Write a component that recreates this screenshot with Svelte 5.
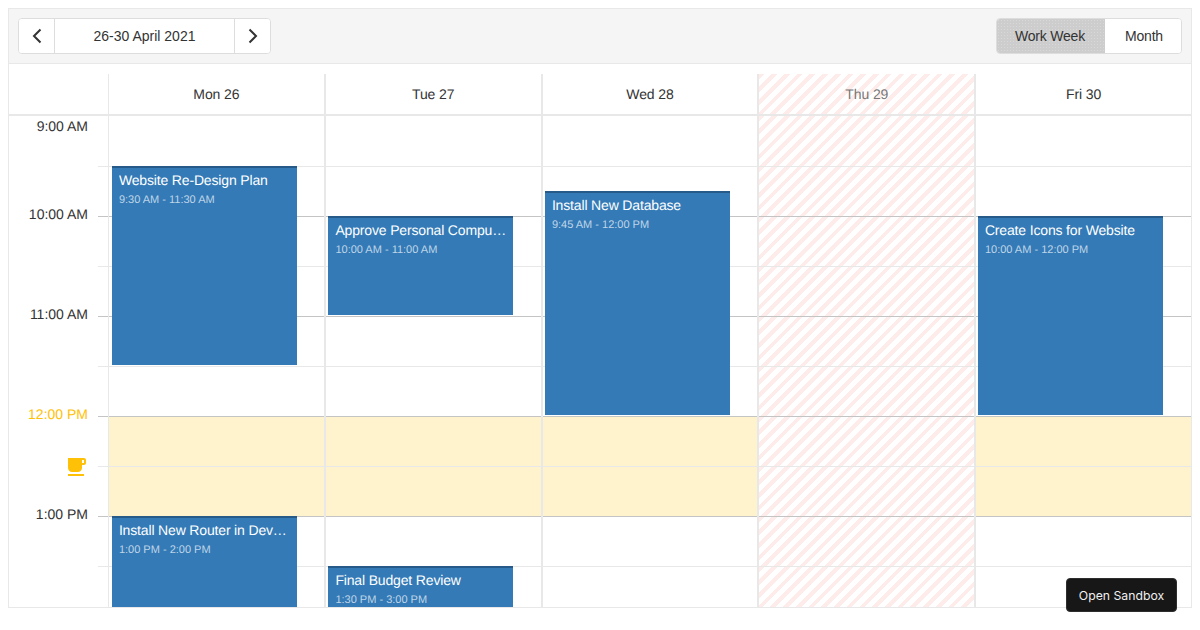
<script lang="ts">
  const days = [
    { label: "Mon 26" },
    { label: "Tue 27" },
    { label: "Wed 28" },
    { label: "Thu 29", disabled: true },
    { label: "Fri 30" },
  ];

  const start = 9;
  const hours = [
    { label: "9:00 AM" },
    { label: "10:00 AM" },
    { label: "11:00 AM" },
    { label: "12:00 PM", dinner: true },
    { label: "1:00 PM" },
  ];

  // half-hour slots, 9:00 to 2:00
  const slots = Array.from({ length: 10 }, (_, i) => ({
    hour: i % 2 === 0,
    dinner: i === 6 || i === 7,
  }));

  const appointments = [
    { day: 0, title: "Website Re-Design Plan", time: "9:30 AM - 11:30 AM", from: 9.5, to: 11.5 },
    { day: 0, title: "Install New Router in Dev Room", time: "1:00 PM - 2:00 PM", from: 13, to: 14 },
    { day: 1, title: "Approve Personal Computer Upgrade Plan", time: "10:00 AM - 11:00 AM", from: 10, to: 11 },
    { day: 1, title: "Final Budget Review", time: "1:30 PM - 3:00 PM", from: 13.5, to: 15 },
    { day: 2, title: "Install New Database", time: "9:45 AM - 12:00 PM", from: 9.75, to: 12 },
    { day: 4, title: "Create Icons for Website", time: "10:00 AM - 12:00 PM", from: 10, to: 12 },
  ];

  const hourHeight = 100;
  const dayStep = 216.5;
</script>

<div class="scheduler">
  <div class="toolbar">
    <div class="nav">
      <button class="nav-btn" aria-label="Previous">
        <svg width="12" height="18" viewBox="0 0 12 18"><path d="M9.500 2.500 3 9l6.500 6.500" /></svg>
      </button>
      <button class="nav-date">26-30 April 2021</button>
      <button class="nav-btn" aria-label="Next">
        <svg width="12" height="18" viewBox="0 0 12 18"><path d="M2.500 2.500 9 9l-6.500 6.500" /></svg>
      </button>
    </div>
    <div class="views">
      <button class="view active">Work Week</button>
      <button class="view month">Month</button>
    </div>
  </div>

  <div class="header">
    <div class="corner"></div>
    {#each days as d}
      <div class="day-head" class:disabled={d.disabled}>{d.label}</div>
    {/each}
  </div>

  <div class="body">
    <div class="times">
      {#each hours as h, i}
        <div class="time-slot" class:first={i === 0}>
          <span class="hour" class:dinner={h.dinner}>{h.label}</span>
        </div>
        <div class="time-slot half">
          {#if h.dinner}
            <svg class="cafe" width="24" height="24" viewBox="0 0 24 24">
              <path d="M20 3H4v10c0 2.210 1.790 4 4 4h6c2.210 0 4-1.790 4-4v-3h2c1.110 0 2-.9 2-2V5c0-1.110-.89-2-2-2zm0 5h-2V5h2v3zM4 19h16v2H4z" />
            </svg>
          {/if}
        </div>
      {/each}
    </div>

    {#each days as d}
      <div class="day">
        {#each slots as s, si}
          <div class="slot" class:hour-line={s.hour && si > 0} class:first={si === 0} class:dinner={s.dinner && !d.disabled} class:disabled={d.disabled}></div>
        {/each}
      </div>
    {/each}

    {#each appointments as a}
      <div
        class="appt"
        style="left: {102.9 + a.day * dayStep}px; top: {(a.from - start) * hourHeight}px; height: {(a.to - a.from) * hourHeight - 1}px"
      >
        <div class="appt-title">{a.title}</div>
        <div class="appt-time">{a.time}</div>
      </div>
    {/each}
  </div>
</div>

<button class="sandbox">Open Sandbox</button>

<style>
  :global(body) {
    margin: 0;
    background: #fff;
    font-family: "Liberation Sans", Arial, sans-serif;
    color: #333;
    text-rendering: geometricPrecision;
  }
  button {
    font: inherit;
    color: inherit;
    padding: 0;
    background: #fff;
    border: 0;
  }
  .scheduler {
    box-sizing: border-box;
    width: 1184px;
    height: 600px;
    margin: 8px 0 0 8px;
    border: 1px solid #e8e8e8;
    overflow: hidden;
    font-size: 14px;
    display: flex;
    flex-direction: column;
  }
  .toolbar {
    box-sizing: border-box;
    flex: none;
    height: 55px;
    padding: 9px;
    background: #f5f5f5;
    border-bottom: 1px solid #e8e8e8;
    display: flex;
    justify-content: space-between;
  }
  .nav,
  .views {
    display: flex;
    height: 36px;
    box-sizing: border-box;
    border: 1px solid #ddd;
    border-radius: 4px;
    background: #fff;
    overflow: hidden;
  }
  .nav-btn {
    width: 35px;
    display: flex;
    align-items: center;
    justify-content: center;
  }
  .nav-btn path {
    fill: none;
    stroke: #333;
    stroke-width: 2;
  }
  .nav-date {
    width: 181px;
    border-left: 1px solid #ddd;
    border-right: 1px solid #ddd;
  }
  .view {
    box-sizing: border-box;
    height: 100%;
    letter-spacing: -0.2px;
  }
  .view.active {
    width: 108px;
    padding-right: 2px;
    background-color: #cdcdcd;
    background-image: radial-gradient(#d8d8d8 0.6px, transparent 0.7px);
    background-size: 3px 3px;
  }
  .view.month {
    width: 76px;
    padding-left: 2px;
  }
  .header {
    flex: none;
    display: grid;
    grid-template-columns: 99px repeat(5, 216.8px);
    padding-top: 10px;
    letter-spacing: -0.1px;
    border-bottom: 2px solid #e8e8e8;
  }
  .day-head {
    height: 40px;
    line-height: 40px;
    text-align: center;
    border-left: 1px solid #e8e8e8;
    border-right: 1px solid #e8e8e8;
  }
  .day-head.disabled {
    color: #777;
    background-image: repeating-linear-gradient(135deg, rgba(244, 67, 54, 0.1), rgba(244, 67, 54, 0.1) 4px, transparent 4px, transparent 9px);
  }
  .body {
    position: relative;
    flex: 1;
    min-height: 0;
    display: grid;
    grid-template-columns: 99px repeat(5, 216.8px);
    align-items: start;
    overflow: hidden;
  }
  .time-slot {
    box-sizing: border-box;
    display: flow-root;
    height: 50px;
    padding-right: 20px;
    text-align: right;
    background: linear-gradient(#c4c4c4, #c4c4c4) right top / 10px 1px no-repeat;
  }
  .time-slot.half {
    background-image: linear-gradient(#e8e8e8, #e8e8e8);
  }
  .time-slot.first {
    background: none;
  }
  .hour {
    display: block;
    line-height: 20px;
    margin-top: -12px;
  }
  .first .hour {
    margin-top: 0;
  }
  .hour.dinner {
    color: #ffc107;
  }
  .cafe {
    display: block;
    margin: -11px 0 0 auto;
    fill: #ffc107;
  }
  .day {
    border-left: 1px solid #e8e8e8;
    border-right: 1px solid #e8e8e8;
  }
  .slot {
    box-sizing: border-box;
    height: 50px;
    border-top: 1px solid #e8e8e8;
  }
  .slot.first {
    border-top: 0;
  }
  .slot.hour-line {
    border-top-color: #c4c4c4;
  }
  .slot.dinner {
    background: #fff3cd;
  }
  .slot.disabled {
    background-image: repeating-linear-gradient(135deg, rgba(244, 67, 54, 0.1), rgba(244, 67, 54, 0.1) 4px, transparent 4px, transparent 9px);
  }
  .appt {
    position: absolute;
    width: 185px;
    box-sizing: border-box;
    padding: 3px 7px;
    background: #337ab7;
    border-top: 2px solid #265a88;
    color: #fff;
  }
  .appt-title {
    line-height: 18px;
    letter-spacing: -0.16px;
    white-space: nowrap;
    overflow: hidden;
    text-overflow: ellipsis;
  }
  .appt-time {
    margin-top: 3px;
    line-height: 16px;
    font-size: 11px;
    color: rgba(255, 255, 255, 0.7);
  }
  .sandbox {
    position: absolute;
    left: 1066px;
    top: 578px;
    width: 111px;
    height: 34px;
    box-sizing: border-box;
    background: #171717;
    border: 1px solid #2e2e2e;
    border-radius: 4px;
    color: #f0f0f0;
    font-family: Inter, sans-serif;
    font-size: 12.25px;
  }
</style>
